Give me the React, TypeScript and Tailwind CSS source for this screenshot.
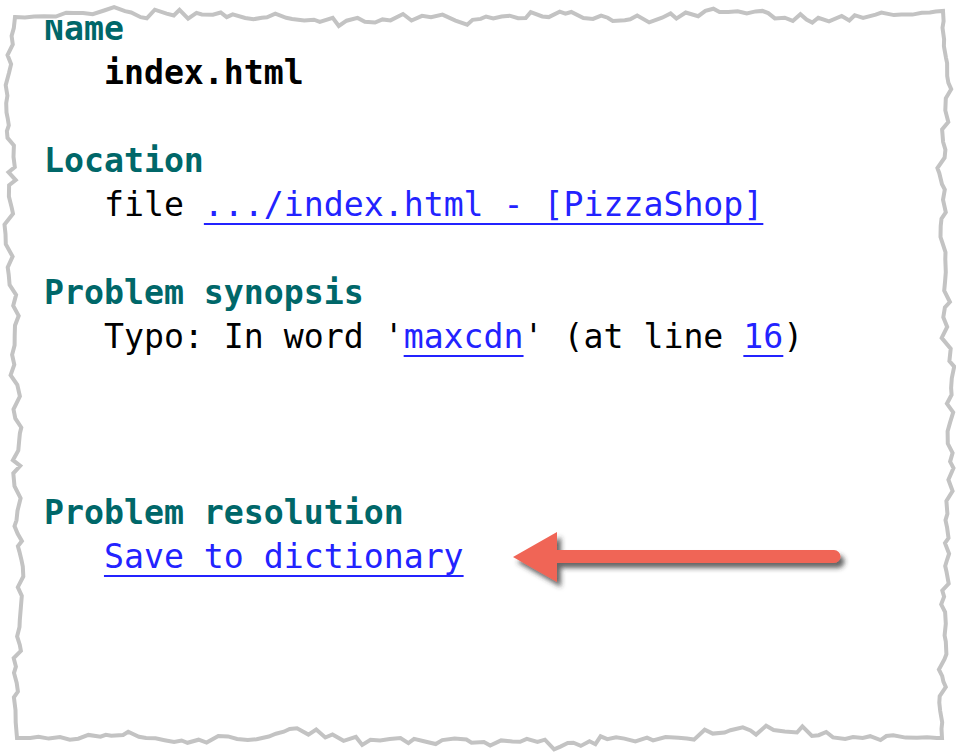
import React from "react";

function mulberry32(a: number) {
  return function () {
    a |= 0;
    a = (a + 0x6d2b79f5) | 0;
    let t = Math.imul(a ^ (a >>> 15), 1 | a);
    t = (t + Math.imul(t ^ (t >>> 7), 61 | t)) ^ t;
    return ((t ^ (t >>> 14)) >>> 0) / 4294967296;
  };
}

function edge(
  x0: number,
  y0: number,
  x1: number,
  y1: number,
  seed: number,
  amp: number
): [number, number][] {
  const r = mulberry32(seed);
  const dx = x1 - x0;
  const dy = y1 - y0;
  const len = Math.hypot(dx, dy);
  const ux = dx / len;
  const uy = dy / len;
  const nx = -uy;
  const ny = ux;
  const pts: [number, number][] = [];
  let t = 0;
  let drift = 0;
  while (t < len) {
    const k = t / len;
    const fade = Math.min(1, k * 12, (1 - k) * 12);
    drift += (r() - 0.5) * 4;
    drift = Math.max(-amp, Math.min(amp, drift));
    const spike = (r() - 0.5) * 9;
    const off = drift + spike;
    pts.push([x0 + ux * t + nx * off * fade, y0 + uy * t + ny * off * fade]);
    t += 5 + r() * 8;
  }
  return pts;
}

const TL: [number, number] = [15, 17];
const TR: [number, number] = [943, 11];
const BR: [number, number] = [942, 738];
const BL: [number, number] = [17, 738];

const allPts = [
  ...edge(TL[0], TL[1], TR[0], TR[1], 11, 7),
  ...edge(TR[0], TR[1], BR[0], BR[1], 23, 8),
  ...edge(BR[0], BR[1], BL[0], BL[1], 37, 8),
  ...edge(BL[0], BL[1], TL[0], TL[1], 51, 8),
];
const tornPath =
  allPts.map((p, i) => `${i === 0 ? "M" : "L"}${p[0].toFixed(1)} ${p[1].toFixed(1)}`).join(" ") + " Z";

const H = "font-bold text-[#006769]";
const LINK = "text-[#2323ff] underline decoration-2 underline-offset-[7px]";

export default function App() {
  return (
    <div className="relative w-[956px] h-[752px] bg-white overflow-hidden font-['DejaVu_Sans_Mono',monospace] text-[33.2px] leading-[44px] text-black">
      <div className="mt-[20px] h-[700px] overflow-hidden pl-[44px]">
        <div className="mt-[-13px] whitespace-pre">
          <div className={H}>Name</div>
          <div className="font-bold">{"   index.html"}</div>
          <div>{" "}</div>
          <div className={H}>Location</div>
          <div>
            {"   file "}
            <span className={LINK}>.../index.html - [PizzaShop]</span>
          </div>
          <div>{" "}</div>
          <div className={H}>Problem synopsis</div>
          <div>
            {"   Typo: In word '"}
            <span className={LINK}>maxcdn</span>
            {"' (at line "}
            <span className={LINK}>16</span>
            {")"}
          </div>
          <div>{" "}</div>
          <div>{" "}</div>
          <div>{" "}</div>
          <div className={H}>Problem resolution</div>
          <div>
            {"   "}
            <span className={LINK}>Save to dictionary</span>
          </div>
        </div>
      </div>

      <svg
        className="absolute left-0 top-0 pointer-events-none"
        width="956"
        height="752"
        viewBox="0 0 956 752"
      >
        <defs>
          <filter id="sh" x="-10%" y="-50%" width="130%" height="250%">
            <feDropShadow dx="4" dy="5" stdDeviation="2.5" floodColor="#333" floodOpacity="0.75" />
          </filter>
        </defs>
        <path
          d={tornPath}
          fill="none"
          stroke="#c3c3c3"
          strokeWidth="4"
          strokeLinejoin="miter"
        />
        <g filter="url(#sh)">
          <path
            d="M513 557 L557 532 L557 550 L834 550 A6.5 6.5 0 0 1 834 563 L557 563 L557 582 Z"
            fill="#f06556"
          />
        </g>
      </svg>
    </div>
  );
}
